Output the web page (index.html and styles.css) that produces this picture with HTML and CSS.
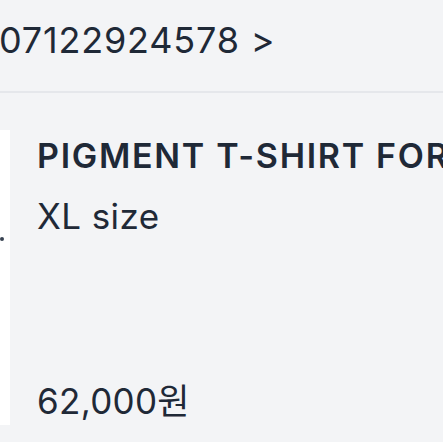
FILE: index.html
```html
<!DOCTYPE html>
<html>
<head>
<meta charset="utf-8">
<link rel="stylesheet" href="styles.css">
</head>
<body>
<div class="page">
  <div class="order-head">
    <span class="order-no">07122924578 &gt;</span>
  </div>
  <div class="item">
    <div class="thumb"><span class="dot"></span></div>
    <div class="info">
      <div class="name">PIGMENT T-SHIRT FOR MEN</div>
      <div class="option">XL size</div>
      <div class="price">62,000원</div>
    </div>
  </div>
</div>
</body>
</html>
```
FILE: styles.css
```css
html, body {
  margin: 0;
  padding: 0;
  background: #f3f4f6;
  overflow: hidden;
}
.page {
  width: 443px;
  height: 442px;
  overflow: hidden;
  font-family: Inter, "Noto Sans CJK KR", sans-serif;
  color: #1f2937;
}
.order-head {
  height: 72px;
  padding-top: 19px;
  border-bottom: 2px solid #e5e7eb;
  margin-left: -1px;
}
.order-no {
  font-size: 36px;
  line-height: 43px;
  white-space: nowrap;
  letter-spacing: 0.8px;
}
.item {
  display: flex;
  margin-top: 37px;
  height: 295px;
}
.thumb {
  width: 10px;
  flex: none;
  background: #ffffff;
  position: relative;
}
.dot {
  position: absolute;
  left: 0;
  top: 107px;
  width: 4px;
  height: 4px;
  border-radius: 50%;
  background: #374151;
}
.info {
  margin-left: 27px;
  display: flex;
  flex-direction: column;
  white-space: nowrap;
}
.name {
  font-size: 34px;
  line-height: 41px;
  font-weight: 600;
  letter-spacing: 1.7px;
  margin-top: 5px;
}
.option {
  font-size: 35px;
  line-height: 42px;
  letter-spacing: 0.4px;
  margin-top: 19px;
}
.price {
  font-size: 35px;
  line-height: 42px;
  letter-spacing: 0.3px;
  margin-top: auto;
  margin-bottom: 3px;
}
```
